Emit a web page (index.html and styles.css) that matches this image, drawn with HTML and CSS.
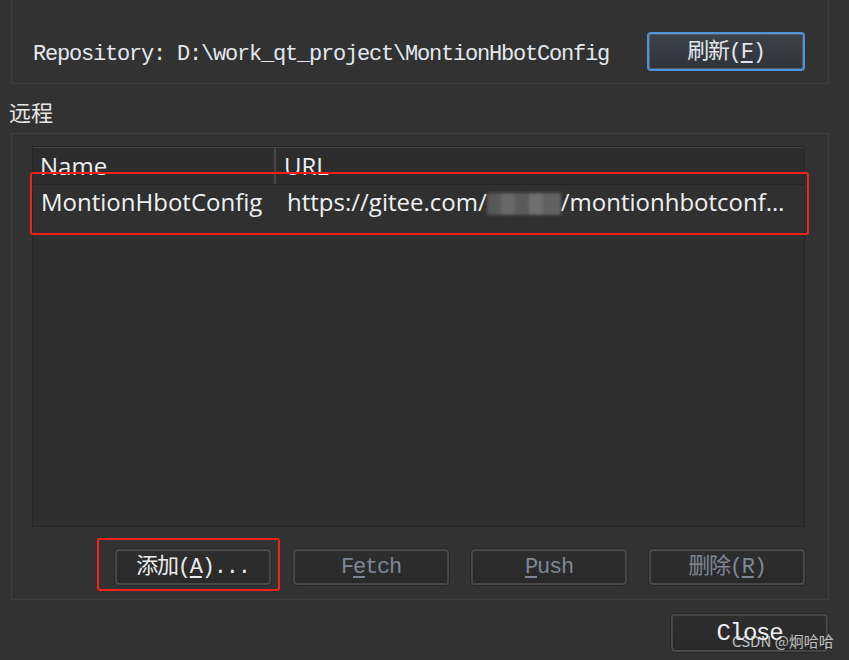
FILE: index.html
```html
<!DOCTYPE html>
<html>
<head>
<meta charset="utf-8">
<link rel="stylesheet" href="styles.css">
</head>
<body>
<div class="page">
  <div class="repo-box">
    <span class="repo-path">Repository: D:\work_qt_project\MontionHbotConfig</span>
    <button class="btn btn-primary">刷新(<u>F</u>)</button>
  </div>
  <div class="section-label">远程</div>
  <div class="remote-box">
    <div class="table">
      <div class="thead">
        <div class="th col-name">Name</div>
        <div class="th col-url">URL</div>
      </div>
      <div class="row">
        <div class="td col-name">MontionHbotConfig</div>
        <div class="td col-url">https://gitee.com/<span class="mosaic"></span>/montionhbotconf…</div>
      </div>
    </div>
    <div class="actions">
      <button class="btn">添加(<u>A</u>)...</button>
      <button class="btn disabled">F<u>e</u>tch</button>
      <button class="btn disabled"><u>P</u>ush</button>
      <button class="btn disabled">删除(<u>R</u>)</button>
    </div>
  </div>
  <div class="footer">
    <button class="btn btn-close">Close</button>
  </div>
  <div class="mark mark-row"></div>
  <div class="mark mark-add"></div>
  <div class="watermark">CSDN @炯哈哈</div>
</div>
</body>
</html>
```
FILE: styles.css
```css
html, body {
  margin: 0;
  padding: 0;
  background: #323232;
}
.page {
  position: relative;
  width: 849px;
  height: 660px;
  overflow: hidden;
  background: #323232;
}
.repo-box {
  box-sizing: border-box;
  margin-left: 11px;
  width: 818px;
  height: 84px;
  border: 1px solid #3e3e3e;
  border-top: none;
  padding: 32px 23px 0 21px;
  display: flex;
  justify-content: space-between;
  align-items: flex-start;
}
.repo-path {
  font-family: "Liberation Mono", "Noto Sans CJK SC", monospace;
  font-size: 22px;
  letter-spacing: -1.2px;
  line-height: 39px;
  padding-top: 3px;
  color: #e4e8ee;
}
.btn {
  box-sizing: border-box;
  width: 156px;
  height: 36px;
  border: 2px solid #474747;
  border-radius: 4px;
  background: linear-gradient(#2e2e2e, #292929);
  box-shadow: 0 0 0 1px #262626;
  font-family: "Liberation Mono", "Noto Sans CJK SC", monospace;
  font-size: 22px;
  letter-spacing: -1.2px;
  line-height: 34px;
  color: #ececec;
  padding: 0;
  margin: 0;
  text-align: center;
}
.btn u {
  text-underline-offset: 3px;
  text-decoration-thickness: 2px;
}
.btn.disabled {
  color: #7e8794;
}
.btn-primary {
  width: 158px;
  height: 39px;
  border: 2px solid #4d94e0;
  background: linear-gradient(#3d4149, #30333a);
  box-shadow: inset 0 0 0 1px #565b64;
  line-height: 38px;
  color: #e2e6ec;
}
.section-label {
  margin: 15px 0 0 9px;
  height: 24px;
  line-height: 24px;
  font-family: "Noto Sans CJK SC", sans-serif;
  font-size: 22px;
  color: #e6e6e6;
}
.remote-box {
  box-sizing: border-box;
  margin: 10px 0 0 11px;
  width: 818px;
  height: 467px;
  border: 1px solid #3e3e3e;
  padding: 12px 23px 0 20px;
}
.table {
  box-sizing: border-box;
  height: 381px;
  border: 1px solid #262626;
  background: #2f2f2f;
  font-family: "Open Sans", "Noto Sans CJK SC", sans-serif;
  font-size: 24px;
  color: #eef0f3;
}
.thead {
  display: flex;
  height: 38px;
  box-sizing: border-box;
  background: #2d2d2d;
  border-top: 1px solid #424242;
  border-bottom: 1px solid #262626;
}
.th {
  line-height: 36px;
  white-space: nowrap;
}
.thead .col-name {
  box-sizing: border-box;
  width: 243px;
  padding-left: 7px;
  border-right: 2px solid #454545;
}
.thead .col-url {
  padding-left: 8px;
}
.row {
  display: flex;
  height: 44px;
  background: #303030;
}
.td {
  line-height: 34px;
  white-space: nowrap;
}
.row .col-name {
  box-sizing: border-box;
  width: 245px;
  padding-left: 8px;
}
.row .col-url {
  padding-left: 9px;
}
.mosaic {
  display: inline-block;
  width: 74px;
  height: 22px;
  vertical-align: -4px;
  background:
    linear-gradient(90deg, #5c5c5c 0 14px, #6e6e6e 14px 28px, #5f5f5f 28px 42px, #767676 42px 56px, #676767 56px 74px);
  filter: blur(1.5px);
  opacity: 0.9;
}
.actions {
  margin-top: 22px;
  display: flex;
  justify-content: flex-end;
  gap: 22px;
}
.footer {
  margin-top: 14px;
  display: flex;
  justify-content: flex-end;
  padding-right: 21px;
}
.btn-close {
  width: 157px;
  height: 38px;
  font-size: 24px;
  line-height: 36px;
  color: #eef0f4;
}
.mark {
  position: absolute;
  box-sizing: border-box;
  border: 2px solid #f0221b;
  border-radius: 3px;
}
.mark-row {
  left: 30px;
  top: 172px;
  width: 779px;
  height: 63px;
}
.mark-add {
  left: 97px;
  top: 538px;
  width: 183px;
  height: 53px;
}
.watermark {
  position: absolute;
  left: 732px;
  top: 631px;
  font-family: "Noto Sans CJK SC", sans-serif;
  font-size: 15px;
  line-height: 20px;
  color: rgba(235, 235, 235, 0.78);
}
```
